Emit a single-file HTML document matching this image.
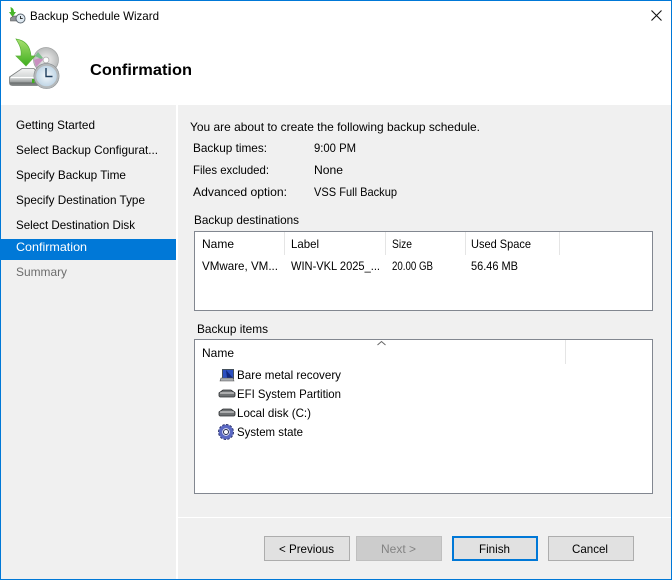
<!DOCTYPE html>
<html><head><meta charset="utf-8"><style>
html,body{margin:0;padding:0;background:#fff}
svg{display:block}
text{font-family:"Liberation Sans",sans-serif;font-size:12px;fill:#000}
.b{fill:#e1e1e1;stroke:#adadad}
</style></head><body>
<svg width="672" height="580" viewBox="0 0 672 580" xmlns="http://www.w3.org/2000/svg">
<defs>
<linearGradient id="ar" x1="0" y1="0" x2="0" y2="1"><stop offset="0" stop-color="#a8e070"/><stop offset="1" stop-color="#3fae1e"/></linearGradient>
<linearGradient id="dr" x1="0" y1="0" x2="0" y2="1"><stop offset="0" stop-color="#f4f4f4"/><stop offset=".55" stop-color="#d0d3d3"/><stop offset="1" stop-color="#707474"/></linearGradient>
<radialGradient id="cl"><stop offset="0" stop-color="#f4f8fb"/><stop offset="1" stop-color="#bcd3e4"/></radialGradient>
<radialGradient id="ds"><stop offset="0" stop-color="#f4f4f4"/><stop offset=".22" stop-color="#aaa"/><stop offset=".3" stop-color="#e2e2e2"/><stop offset="1" stop-color="#b9bbbb"/></radialGradient>
</defs>
<rect width="672" height="580" fill="#0078d7"/>
<rect x="1" y="1" width="670" height="578" fill="#fff"/>
<rect x="1" y="105" width="175" height="474" fill="#f0f0f0"/>
<rect x="178" y="105" width="493" height="474" fill="#f0f0f0"/>
<rect x="178" y="517" width="493" height="1" fill="#fff"/>
<rect x="1" y="239" width="175" height="21" fill="#0078d7"/>

<!-- title icon -->
<path d="M10.500 7c2 1 3.500 2 3.500 5h2l-3.500 5-3.500-5h2z" fill="#46b52a"/>
<path d="M10.500 18l3-2h4v5h-7z" fill="#8d9296" stroke="#555" stroke-width=".6"/>
<circle cx="20.500" cy="18.500" r="4.500" fill="#dfe9f1" stroke="#5c6670"/>
<path d="M20.500 16v2.500h2.200" fill="none" stroke="#333"/>
<text x="30" y="20" textLength="129" lengthAdjust="spacingAndGlyphs">Backup Schedule Wizard</text>
<path d="M651.500 10.500l10 10M661.500 10.500l-10 10" stroke="#111" stroke-width="1.100"/>

<!-- header icon -->
<circle cx="46" cy="60" r="12.500" fill="url(#ds)" stroke="#a0a2a2" stroke-width=".7"/>
<path d="M34 60L42 57 43 60 36 67z" fill="#c98fc0"/>
<path d="M38 52l5 6-2 1-6-3z" fill="#7bbf8a"/>
<circle cx="46" cy="60" r="2.500" fill="#fff"/>
<path d="M16 39c7 1 14 5 15 17l4 0-9 10-10-10 5 0c1-7-2-12-5-17z" fill="url(#ar)" stroke="#57b036" stroke-width=".7"/>
<path d="M9.500 77L22 68.500h12l6 8v6q0 3-3 3H12.500q-3 0-3-3z" fill="url(#dr)" stroke="#7a7e7e" stroke-width=".8"/>
<path d="M11 77.500H38" stroke="#fff" stroke-width="1.200"/>
<path d="M10 83H36" stroke="#5f6363" stroke-width="1"/>
<rect x="32" y="79" width="2.500" height="4" fill="#3fae1e"/>
<circle cx="46.500" cy="76" r="11.300" fill="url(#cl)" stroke="#b4b8ba" stroke-width="2"/>
<circle cx="46.500" cy="76" r="12.600" fill="none" stroke="#7e8488" stroke-width=".6"/>
<path d="M46 68v8.500h6.500" fill="none" stroke="#1e3d5c" stroke-width="1.400"/>
<text x="90" y="75" textLength="102" lengthAdjust="spacingAndGlyphs" style="font-size:16px;font-weight:bold">Confirmation</text>

<!-- nav -->
<text x="16" y="129" textLength="79" lengthAdjust="spacingAndGlyphs">Getting Started</text>
<text x="16" y="154" textLength="142" lengthAdjust="spacingAndGlyphs">Select Backup Configurat...</text>
<text x="16" y="179" textLength="110" lengthAdjust="spacingAndGlyphs">Specify Backup Time</text>
<text x="16" y="204" textLength="129" lengthAdjust="spacingAndGlyphs">Specify Destination Type</text>
<text x="16" y="229" textLength="119" lengthAdjust="spacingAndGlyphs">Select Destination Disk</text>
<text x="16" y="251" textLength="71" lengthAdjust="spacingAndGlyphs" style="fill:#fff">Confirmation</text>
<text x="16" y="276" textLength="51" lengthAdjust="spacingAndGlyphs" style="fill:#6d6d6d">Summary</text>

<!-- summary -->
<text x="190" y="131" textLength="290" lengthAdjust="spacingAndGlyphs">You are about to create the following backup schedule.</text>
<text x="193" y="152" textLength="74" lengthAdjust="spacingAndGlyphs">Backup times:</text>
<text x="314" y="152" textLength="42" lengthAdjust="spacingAndGlyphs">9:00 PM</text>
<text x="193" y="174" textLength="76" lengthAdjust="spacingAndGlyphs">Files excluded:</text>
<text x="314" y="174" textLength="29" lengthAdjust="spacingAndGlyphs">None</text>
<text x="193" y="196" textLength="94" lengthAdjust="spacingAndGlyphs">Advanced option:</text>
<text x="314" y="196" textLength="83" lengthAdjust="spacingAndGlyphs">VSS Full Backup</text>

<!-- destinations -->
<text x="194" y="224" textLength="105" lengthAdjust="spacingAndGlyphs">Backup destinations</text>
<rect x="194.500" y="231.500" width="458" height="79" fill="#fff" stroke="#828790"/>
<path d="M284.500 232v23M385.500 232v23M465.500 232v23M559.500 232v23" stroke="#e5e5e5"/>
<text x="202" y="248" textLength="32" lengthAdjust="spacingAndGlyphs">Name</text>
<text x="291" y="248" textLength="28" lengthAdjust="spacingAndGlyphs">Label</text>
<text x="392" y="248" textLength="20" lengthAdjust="spacingAndGlyphs">Size</text>
<text x="471" y="248" textLength="60" lengthAdjust="spacingAndGlyphs">Used Space</text>
<text x="202" y="270" textLength="76" lengthAdjust="spacingAndGlyphs">VMware, VM...</text>
<text x="291" y="270" textLength="89" lengthAdjust="spacingAndGlyphs">WIN-VKL 2025_...</text>
<text x="392" y="270" textLength="41" lengthAdjust="spacingAndGlyphs">20.00 GB</text>
<text x="471" y="270" textLength="47" lengthAdjust="spacingAndGlyphs">56.46 MB</text>

<!-- items -->
<text x="197" y="333" textLength="71" lengthAdjust="spacingAndGlyphs">Backup items</text>
<rect x="194.500" y="339.500" width="458" height="154" fill="#fff" stroke="#828790"/>
<path d="M565.500 340v24" stroke="#e5e5e5"/>
<path d="M377.500 345l4-3.500 4 3.500" fill="none" stroke="#666"/>
<text x="202" y="357" textLength="32" lengthAdjust="spacingAndGlyphs">Name</text>

<!-- bare metal icon -->
<rect x="222.500" y="369.500" width="11" height="9" fill="#2b4fc0" stroke="#45505c"/>
<path d="M226 370l7 8h-6z" fill="#12287e"/>
<path d="M221 378l-1 3h14l-1-3z" fill="#a9adb0" stroke="#555" stroke-width=".6"/>
<text x="237" y="379" textLength="104" lengthAdjust="spacingAndGlyphs">Bare metal recovery</text>
<!-- disk icons -->
<path d="M219 393l4-3h8l4 3v3l-1 1h-14l-1-1z" fill="#6f7274" stroke="#2e3032" stroke-width=".8"/>
<path d="M220 393h14" stroke="#e8e8e8"/>
<text x="237" y="398" textLength="104" lengthAdjust="spacingAndGlyphs">EFI System Partition</text>
<path d="M219 412l4-3h8l4 3v3l-1 1h-14l-1-1z" fill="#6f7274" stroke="#2e3032" stroke-width=".8"/>
<path d="M220 412h14" stroke="#e8e8e8"/>
<text x="237" y="417" textLength="74" lengthAdjust="spacingAndGlyphs">Local disk (C:)</text>
<!-- system state icon -->
<circle cx="226" cy="432" r="5.500" fill="#fff" stroke="#5b69c4" stroke-width="3.500"/>
<circle cx="226" cy="432" r="7.500" fill="none" stroke="#2c336e" stroke-width="1" stroke-dasharray="2.500 1.400"/>
<circle cx="226" cy="432" r="2.500" fill="#fff" stroke="#1e2450"/>
<text x="237" y="436" textLength="66" lengthAdjust="spacingAndGlyphs">System state</text>

<!-- buttons -->
<rect class="b" x="264.500" y="536.500" width="85" height="24"/>
<text x="279" y="553" textLength="55" lengthAdjust="spacingAndGlyphs">&lt; Previous</text>
<rect x="356.500" y="536.500" width="85" height="24" fill="#ccc" stroke="#bfbfbf"/>
<text x="381" y="553" textLength="35" lengthAdjust="spacingAndGlyphs" style="fill:#838383">Next &gt;</text>
<rect x="453" y="537" width="84" height="23" fill="#e1e1e1" stroke="#0078d7" stroke-width="2"/>
<text x="479" y="553" textLength="31" lengthAdjust="spacingAndGlyphs">Finish</text>
<rect class="b" x="548.500" y="536.500" width="85" height="24"/>
<text x="572" y="553" textLength="36" lengthAdjust="spacingAndGlyphs">Cancel</text>
</svg>
</body></html>
